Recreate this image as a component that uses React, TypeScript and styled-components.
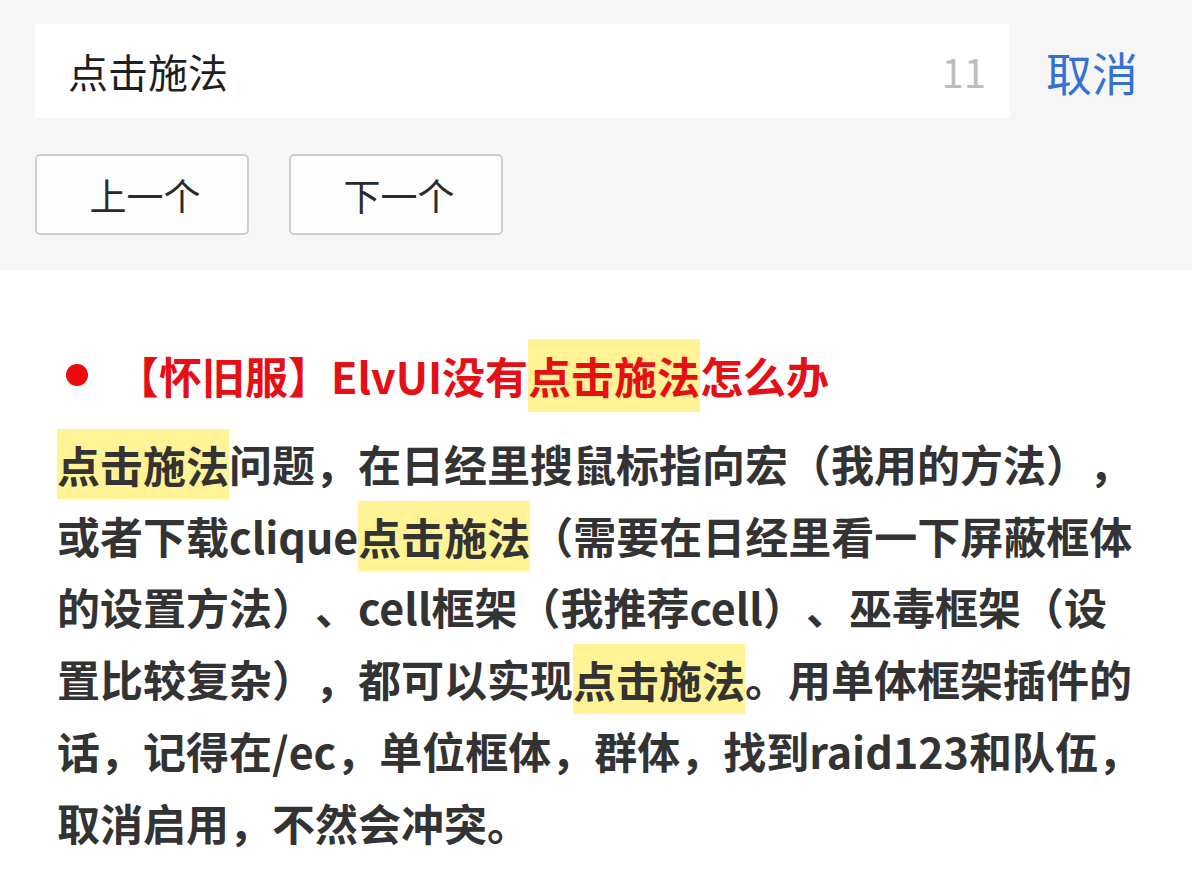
import React from "react";
import styled, { createGlobalStyle } from "styled-components";

const GlobalStyle = createGlobalStyle`
  html, body {
    margin: 0;
    padding: 0;
    background: #ffffff;
  }
  body {
    font-family: "Noto Sans CJK SC", "Noto Sans", sans-serif;
    -webkit-font-smoothing: antialiased;
    text-spacing-trim: space-all;
  }
  * { box-sizing: border-box; }
`;

const SearchPanel = styled.div`
  background: #f6f6f7;
  padding: 24px 0 35px 35px;
  height: 270px;
`;

const SearchRow = styled.div`
  display: flex;
  align-items: center;
  height: 94px;
`;

const SearchBox = styled.div`
  width: 975px;
  height: 94px;
  background: #ffffff;
  display: flex;
  align-items: center;
  justify-content: space-between;
  padding: 0 24px 0 33px;
`;

const Query = styled.span`
  font-size: 40px;
  color: #1f1f1f;
  font-weight: 400;
  line-height: 1;
`;

const Count = styled.span`
  font-size: 40px;
  color: #bdbdbd;
  font-weight: 400;
  line-height: 1;
`;

const Cancel = styled.button`
  border: none;
  background: transparent;
  padding: 0;
  margin-left: 36px;
  font-family: inherit;
  font-size: 46px;
  color: #3371d2;
  line-height: 1;
  cursor: pointer;
`;

const NavRow = styled.div`
  display: flex;
  gap: 40px;
  margin-top: 36px;
`;

const NavButton = styled.button`
  width: 214px;
  height: 81px;
  border: 2px solid #cfcfd3;
  border-radius: 5px;
  background: #fdfdfd;
  font-family: inherit;
  font-size: 37px;
  color: #2b2b2b;
  padding: 0 0 0 6px;
  cursor: pointer;
`;

const Content = styled.div`
  padding: 70px 0 0 57px;
  width: 1145px;
  text-spacing-trim: space-all;
`;

const Title = styled.div`
  display: flex;
  align-items: center;
  height: 73px;
  margin-bottom: 15px;
  font-size: 43px;
  font-weight: 700;
  color: #e50f16;
  line-height: 73px;
`;

const Bullet = styled.span`
  width: 22px;
  height: 22px;
  border-radius: 50%;
  background: #ea0a0f;
  margin: -4px 28px 0 9px;
  flex: none;
`;

const TitleText = styled.span`
  margin-top: -3px;
`;

const Paragraph = styled.p`
  margin: 0;
  font-size: 43px;
  font-weight: 700;
  line-height: 71.7px;
  color: #333333;
`;

const Mark = styled.span<{ $tall?: boolean }>`
  background: #fff395;
  display: inline-block;
  height: ${(p) => (p.$tall ? "73px" : "70px")};
  line-height: ${(p) => (p.$tall ? "73px" : "70px")};
  vertical-align: top;
  margin-top: ${(p) => (p.$tall ? "0" : "1px")};
`;

const keyword = "点击施法";

export default function App() {
  return (
    <>
      <GlobalStyle />
      <SearchPanel>
        <SearchRow>
          <SearchBox>
            <Query>{keyword}</Query>
            <Count>11</Count>
          </SearchBox>
          <Cancel>取消</Cancel>
        </SearchRow>
        <NavRow>
          <NavButton>上一个</NavButton>
          <NavButton>下一个</NavButton>
        </NavRow>
      </SearchPanel>
      <Content>
        <Title>
          <Bullet />
          <TitleText>
            【怀旧服】ElvUI没有<Mark $tall>{keyword}</Mark>怎么办
          </TitleText>
        </Title>
        <Paragraph>
          <Mark>{keyword}</Mark>问题，在日经里搜鼠标指向宏（我用的方法），或者下载clique
          <Mark>{keyword}</Mark>（需要在日经里看一下屏蔽框体的设置方法）、cell框架（我推荐cell）、巫毒框架（设置比较复杂），都可以实现
          <Mark>{keyword}</Mark>。用单体框架插件的话，记得在/ec，单位框体，群体，找到raid123和队伍，取消启用，不然会冲突。
        </Paragraph>
      </Content>
    </>
  );
}
